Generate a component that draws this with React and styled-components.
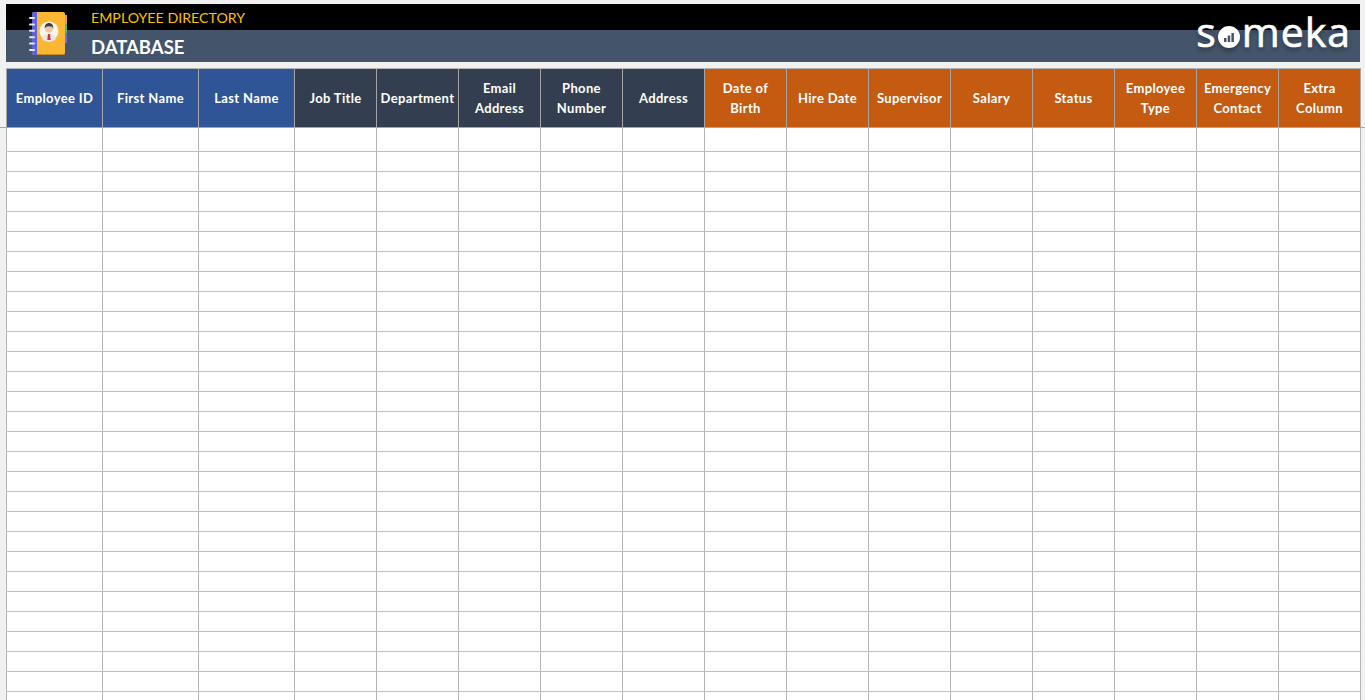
import styled, { createGlobalStyle } from 'styled-components'

const columns = [
  { label: ['Employee ID'], width: 96, tone: 'blue' },
  { label: ['First Name'], width: 96, tone: 'blue' },
  { label: ['Last Name'], width: 96, tone: 'blue' },
  { label: ['Job Title'], width: 82, tone: 'slate' },
  { label: ['Department'], width: 82, tone: 'slate' },
  { label: ['Email', 'Address'], width: 82, tone: 'slate' },
  { label: ['Phone', 'Number'], width: 82, tone: 'slate' },
  { label: ['Address'], width: 82, tone: 'slate' },
  { label: ['Date of', 'Birth'], width: 82, tone: 'orange' },
  { label: ['Hire Date'], width: 82, tone: 'orange' },
  { label: ['Supervisor'], width: 82, tone: 'orange' },
  { label: ['Salary'], width: 82, tone: 'orange' },
  { label: ['Status'], width: 82, tone: 'orange' },
  { label: ['Employee', 'Type'], width: 82, tone: 'orange' },
  { label: ['Emergency', 'Contact'], width: 82, tone: 'orange' },
  { label: ['Extra', 'Column'], width: 83, tone: 'orange' },
]

const tones = { blue: '#2f5597', slate: '#333f50', orange: '#c55a11' }
const rows = Array.from({ length: 29 }, (_, i) => i)
const template = columns.map((c) => `${c.width}px`).join(' ')

function BookIcon() {
  return (
    <svg width="44" height="48" viewBox="0 0 44 48">
      <rect x="37" y="5" width="3" height="9" fill="#f28b82" />
      <rect x="37" y="14" width="3" height="9" fill="#3fbf7f" />
      <rect x="37" y="23" width="3" height="10" fill="#6a6ee8" />
      <rect x="5" y="2" width="33" height="43" rx="2" fill="#fbb632" />
      <path d="M7 2h3v43H7a2 2 0 0 1-2-2V4a2 2 0 0 1 2-2z" fill="#5f61de" />
      <path d="M10 44h26a2 2 0 0 0 2-2v1a2 2 0 0 1-2 2H10z" fill="#c98a1c" />
      {[7, 13.4, 19.8, 26.2, 32.6, 39].map((y) => (
        <rect key={y} x="2" y={y} width="6" height="2" rx="1" fill="#e6e6f5" />
      ))}
      <g transform="translate(-2 1)">
        <circle cx="24" cy="20" r="9.5" fill="#fdf6ec" />
        <path d="M17 28c1-4 4-5 7-5s6 1 7 5a9.500 9.500 0 0 1-14 0z" fill="#e8e4ea" />
        <path d="M23 23h2l.7 6h-3.400z" fill="#c8353b" />
        <circle cx="24" cy="18" r="3.800" fill="#f3c6a5" />
        <path d="M19.800 18c-.6-4 1.700-6 4.200-6s4.800 2 4.200 6c-.5-2-1.500-2.700-4.200-2.700s-3.700.7-4.200 2.700z" fill="#3a3f4a" />
      </g>
    </svg>
  )
}

function BarsIcon() {
  return (
    <svg width="12" height="12" viewBox="0 0 12 12">
      <rect x="1" y="7" width="2.500" height="4" fill="#44546a" />
      <rect x="4.700" y="4.500" width="2.500" height="6.500" fill="#44546a" />
      <rect x="8.400" y="2" width="2.500" height="9" fill="#44546a" />
    </svg>
  )
}

export default function App() {
  return (
    <>
      <GlobalStyle />
      <Page>
        <Banner>
          <LogoSlot>
            <BookIcon />
          </LogoSlot>
          <TitleBar>
            <AppName>EMPLOYEE DIRECTORY</AppName>
          </TitleBar>
          <SubBar>
            <PageName>DATABASE</PageName>
          </SubBar>
          <Brand>
            <span>s</span>
            <BrandDot>
              <BarsIcon />
            </BrandDot>
            <span>meka</span>
          </Brand>
        </Banner>
        <Sheet>
          <HeaderRow>
            {columns.map((c) => (
              <HeaderCell key={c.label.join(' ')} $tone={c.tone}>
                {c.label.map((line) => (
                  <span key={line}>{line}</span>
                ))}
              </HeaderCell>
            ))}
          </HeaderRow>
          {rows.map((r) => (
            <Row key={r} $first={r === 0}>
              {columns.map((c) => (
                <Cell key={c.label.join(' ')} />
              ))}
            </Row>
          ))}
        </Sheet>
      </Page>
    </>
  )
}

const GlobalStyle = createGlobalStyle`
  html, body {
    margin: 0;
    height: 700px;
    overflow: hidden;
    background: #f1f1f1;
  }
`

const Page = styled.div`
  box-sizing: border-box;
  height: 700px;
  padding: 4px 4px 0 6px;
  overflow: hidden;
  font-family: Lato, "Open Sans", sans-serif;
`

const Banner = styled.header`
  position: relative;
  width: 1354px;
  height: 58px;
`

const LogoSlot = styled.div`
  position: absolute;
  left: 21px;
  top: 6px;
  line-height: 0;
`

const TitleBar = styled.div`
  height: 26px;
  padding-left: 85px;
  display: flex;
  align-items: center;
  background: #000;
`

const SubBar = styled.div`
  height: 32px;
  padding-left: 85px;
  display: flex;
  align-items: center;
  background: #44546a;
`

const AppName = styled.h1`
  margin: 0;
  font-size: 14.2px;
  font-weight: 400;
  color: #ffc000;
`

const PageName = styled.h2`
  margin: 2px 0 0;
  font-size: 18.500px;
  font-weight: 700;
  color: #fff;
`

const Brand = styled.div`
  position: absolute;
  right: 9px;
  top: 3px;
  display: flex;
  align-items: center;
  font-family: "Open Sans", sans-serif;
  font-size: 41px;
  font-weight: 400;
  letter-spacing: 1px;
  line-height: 48px;
  color: #fff;
  -webkit-text-stroke: 0.7px #fff;
  text-shadow: 0 3px 4px rgba(0, 0, 0, 0.35);
`

const BrandDot = styled.span`
  width: 22px;
  height: 22px;
  margin: 12px 2px 0 1px;
  display: flex;
  align-items: center;
  justify-content: center;
  border-radius: 50%;
  background: #fff;
  box-shadow: 0 3px 4px rgba(0, 0, 0, 0.3);
`

const Sheet = styled.main`
  margin-top: 6px;
  width: 1355px;
`

const HeaderRow = styled.div`
  position: relative;
  display: grid;
  grid-template-columns: ${template};
  height: 59px;
  border-top: 1px solid #b4b4b4;
  box-sizing: border-box;

  /* the rule under the header runs on past the sheet to both window edges */
  &::after {
    content: '';
    position: absolute;
    left: -6px;
    right: -4px;
    bottom: -1px;
    height: 1px;
    background: #a6a6a6;
  }
`

const HeaderCell = styled.div`
  box-sizing: border-box;
  display: flex;
  flex-direction: column;
  align-items: center;
  justify-content: center;
  border-left: 1px solid #a6a6a6;
  background: ${(p) => tones[p.$tone]};
  font-size: 13px;
  font-weight: 700;
  letter-spacing: 0.35px;
  line-height: 20px;
  color: #fff;
  white-space: nowrap;
  &:last-child {
    border-right: 1px solid #a6a6a6;
  }
`

const Row = styled.div`
  display: grid;
  grid-template-columns: ${template};
  height: ${(p) => (p.$first ? '25px' : '20px')};
  box-sizing: border-box;
  border-bottom: 1px solid #bfbfbf;
`

const Cell = styled.div`
  box-sizing: border-box;
  background: #fff;
  border-left: 1px solid #b4b4b4;
  &:last-child {
    border-right: 1px solid #b4b4b4;
  }
`
